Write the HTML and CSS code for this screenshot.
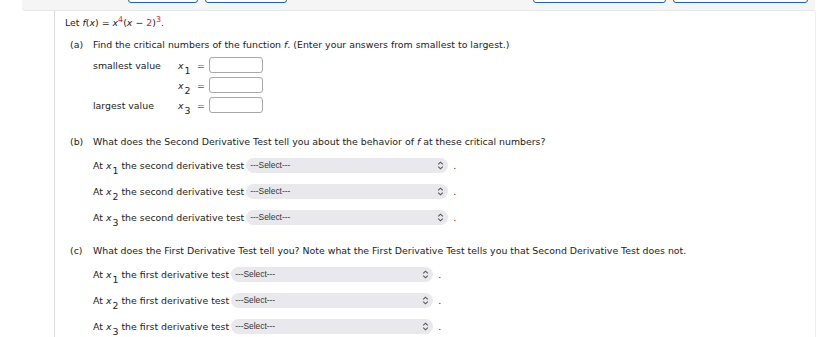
FILE: index.html
```html
<!DOCTYPE html>
<html>
<head>
<meta charset="utf-8">
<link rel="stylesheet" href="styles.css">
</head>
<body>
<div class="topbar">
  <span class="tbtn b1"></span>
  <span class="tbtn b2"></span>
  <span class="tbtn b3"></span>
  <span class="tbtn b4"></span>
</div>
<div class="main">
  <div class="intro">Let <i>f</i>(<i>x</i>) = <i>x</i><sup class="red">4</sup>(<i>x</i> − <span class="red">2</span>)<sup class="red">3</sup>.</div>

  <div class="qline"><span class="lbl">(a)</span><span>Find the critical numbers of the function <i>f</i>. (Enter your answers from smallest to largest.)</span></div>
  <div class="ans">
    <div class="arow"><span class="aname">smallest value</span><span class="var"><i>x</i><sub>1</sub></span><span class="eq">=</span><span class="box"></span></div>
    <div class="arow"><span class="aname"></span><span class="var"><i>x</i><sub>2</sub></span><span class="eq">=</span><span class="box"></span></div>
    <div class="arow"><span class="aname">largest value</span><span class="var"><i>x</i><sub>3</sub></span><span class="eq">=</span><span class="box"></span></div>
  </div>

  <div class="qline qb"><span class="lbl">(b)</span><span>What does the Second Derivative Test tell you about the behavior of <i>f</i> at these critical numbers?</span></div>
  <div class="srow"><span class="stext">At <i>x</i><sub>1</sub> the second derivative test</span><span class="sel"><span>---Select---</span><svg class="chev" width="7" height="9" viewBox="0 0 7 9"><path d="M1.2 3.4 L3.5 1.2 L5.8 3.4 M1.2 5.6 L3.5 7.8 L5.8 5.6" fill="none" stroke="#555" stroke-width="1.1"/></svg></span><span class="dot">.</span></div>
  <div class="srow"><span class="stext">At <i>x</i><sub>2</sub> the second derivative test</span><span class="sel"><span>---Select---</span><svg class="chev" width="7" height="9" viewBox="0 0 7 9"><path d="M1.2 3.4 L3.5 1.2 L5.8 3.4 M1.2 5.6 L3.5 7.8 L5.8 5.6" fill="none" stroke="#555" stroke-width="1.1"/></svg></span><span class="dot">.</span></div>
  <div class="srow"><span class="stext">At <i>x</i><sub>3</sub> the second derivative test</span><span class="sel"><span>---Select---</span><svg class="chev" width="7" height="9" viewBox="0 0 7 9"><path d="M1.2 3.4 L3.5 1.2 L5.8 3.4 M1.2 5.6 L3.5 7.8 L5.8 5.6" fill="none" stroke="#555" stroke-width="1.1"/></svg></span><span class="dot">.</span></div>

  <div class="qline qc"><span class="lbl">(c)</span><span>What does the First Derivative Test tell you? Note what the First Derivative Test tells you that Second Derivative Test does not.</span></div>
  <div class="srow"><span class="stext">At <i>x</i><sub>1</sub> the first derivative test</span><span class="sel"><span>---Select---</span><svg class="chev" width="7" height="9" viewBox="0 0 7 9"><path d="M1.2 3.4 L3.5 1.2 L5.8 3.4 M1.2 5.6 L3.5 7.8 L5.8 5.6" fill="none" stroke="#555" stroke-width="1.1"/></svg></span><span class="dot">.</span></div>
  <div class="srow"><span class="stext">At <i>x</i><sub>2</sub> the first derivative test</span><span class="sel"><span>---Select---</span><svg class="chev" width="7" height="9" viewBox="0 0 7 9"><path d="M1.2 3.4 L3.5 1.2 L5.8 3.4 M1.2 5.6 L3.5 7.8 L5.8 5.6" fill="none" stroke="#555" stroke-width="1.1"/></svg></span><span class="dot">.</span></div>
  <div class="srow"><span class="stext">At <i>x</i><sub>3</sub> the first derivative test</span><span class="sel"><span>---Select---</span><svg class="chev" width="7" height="9" viewBox="0 0 7 9"><path d="M1.2 3.4 L3.5 1.2 L5.8 3.4 M1.2 5.6 L3.5 7.8 L5.8 5.6" fill="none" stroke="#555" stroke-width="1.1"/></svg></span><span class="dot">.</span></div>
</div>
</body>
</html>
```
FILE: styles.css
```css
html, body {
  margin: 0;
  padding: 0;
  background: #fff;
  overflow: hidden;
}
body {
  font-family: "DejaVu Sans", Verdana, sans-serif;
  font-size: 9.4px;
  color: #222;
  width: 828px;
  height: 337px;
}
.topbar {
  margin-left: 22px;
  width: 793px;
  height: 10px;
  background: #f5f5f5;
  border-bottom: 1px solid #e6e6e6;
  border-bottom-left-radius: 4px;
  display: flex;
  align-items: flex-start;
  overflow: hidden;
}
.tbtn {
  display: block;
  height: 12px;
  margin-top: -9px;
  border: 1px solid #1a64a6;
  border-radius: 3px;
  background: #fff;
  box-sizing: border-box;
}
.b1 { margin-left: 106px; width: 70px; }
.b2 { margin-left: 7px; width: 82px; }
.b3 { margin-left: 246px; width: 133px; }
.b4 { margin-left: 7px; width: 135px; }

.main {
  margin-left: 54px;
  width: 762px;
  height: 330px;
  border-left: 1px solid #dcdcdc;
  border-right: 1px solid #efefef;
  padding-left: 10px;
  box-sizing: border-box;
}
.intro {
  height: 24px;
  line-height: 24px;
}
.red { color: #e01b1b; }
sup {
  font-size: 0.85em;
  vertical-align: 0;
  position: relative;
  top: -4px;
}
sub {
  font-size: 1em;
  vertical-align: 0;
  position: relative;
  top: 5px;
  margin-left: 1px;
}
.qline {
  display: flex;
  height: 20px;
  line-height: 20px;
  padding-left: 5px;
}
.lbl { width: 23px; flex: none; }
.qb { margin-top: 17px; }
.qc { margin-top: 11px; }
.ans { padding-left: 28px; }
.arow {
  display: flex;
  align-items: center;
  height: 20px;
}
.aname { width: 85px; flex: none; }
.var { width: 19px; flex: none; }
.eq { width: 12px; flex: none; color: #555; }
.box {
  width: 54px;
  height: 16px;
  box-sizing: border-box;
  border: 1px solid #a8a8a8;
  border-radius: 3px;
  background: #fff;
}
.srow {
  display: flex;
  align-items: center;
  height: 26px;
  padding-left: 28px;
}
.stext { margin-right: 2px; white-space: nowrap; }
.sel {
  width: 202px;
  height: 15px;
  box-sizing: border-box;
  background: #e9e9ed;
  border-radius: 8px;
  display: flex;
  align-items: center;
  justify-content: space-between;
  padding: 0 4px 0 4px;
  font-family: "Liberation Sans", Arial, sans-serif;
  font-size: 8.4px;
  color: #333;
}
.chev { display: block; }
.dot { margin-left: 5px; }
```
